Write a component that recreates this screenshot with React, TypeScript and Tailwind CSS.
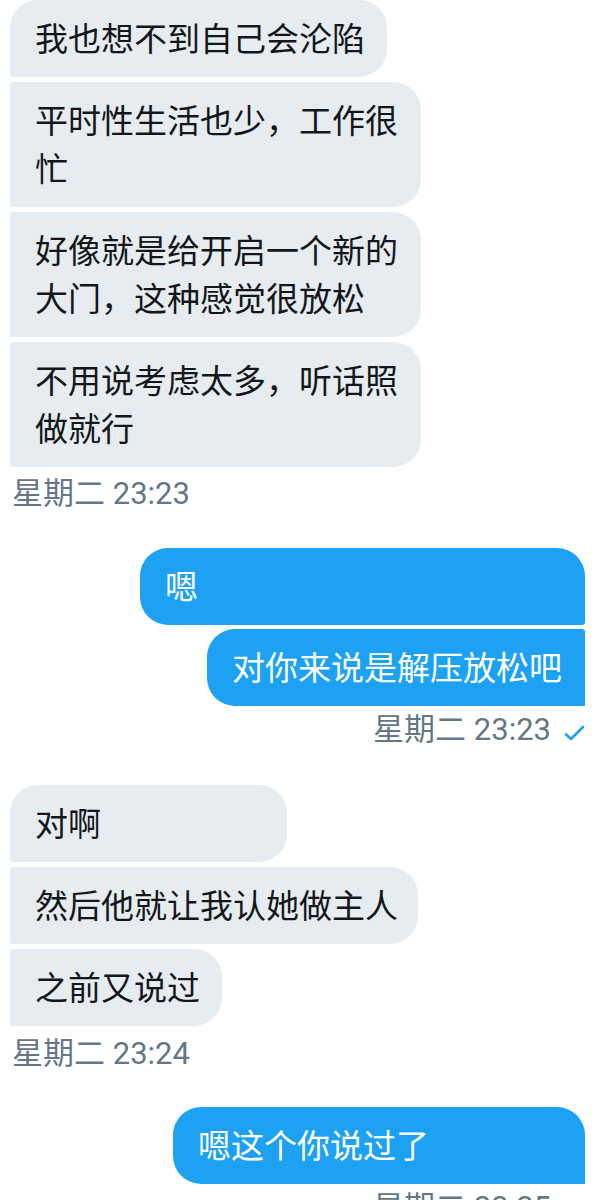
import React from "react";

type Msg = {
    text: string;
    width: number;
    corners: string;
};

const FONT = "font-['Roboto','Noto_Sans_CJK_SC',sans-serif]";

// Left-side (received) messages
const leftGroup1: Msg[] = [
    { text: "我也想不到自己会沦陷", width: 377, corners: "rounded-tl-[28px] rounded-bl-[3px] rounded-r-[28px]" },
    { text: "平时性生活也少，工作很忙", width: 411, corners: "rounded-l-[3px] rounded-r-[28px]" },
    { text: "好像就是给开启一个新的大门，这种感觉很放松", width: 411, corners: "rounded-l-[3px] rounded-r-[28px]" },
    { text: "不用说考虑太多，听话照做就行", width: 411, corners: "rounded-l-[3px] rounded-r-[28px]" },
];

const leftGroup2: Msg[] = [
    { text: "对啊", width: 277, corners: "rounded-tl-[28px] rounded-bl-[3px] rounded-r-[28px]" },
    { text: "然后他就让我认她做主人", width: 408, corners: "rounded-l-[3px] rounded-r-[28px]" },
    { text: "之前又说过", width: 212, corners: "rounded-tl-[3px] rounded-bl-none rounded-r-[28px]" },
];

const rightGroup1: Msg[] = [
    { text: "嗯", width: 445, corners: "rounded-l-[28px] rounded-tr-[28px] rounded-br-[3px]" },
    { text: "对你来说是解压放松吧", width: 378, corners: "rounded-l-[28px] rounded-tr-[3px] rounded-br-none" },
];

const rightGroup2: Msg[] = [
    { text: "嗯这个你说过了", width: 412, corners: "rounded-l-[28px] rounded-tr-[28px] rounded-br-none" },
];

const Bubble = ({ msg, mine }: { msg: Msg; mine: boolean }) => (
    <div
        className={`${msg.corners} pt-[15.5px] pb-[13.5px] pl-[25px] pr-[14px] text-[33px] leading-[48px] ${
            mine ? "bg-[#1da1f2] text-white" : "bg-[#e6ecf0] text-[#14171a]"
        }`}
        style={{ width: msg.width }}
    >
        {msg.text}
    </div>
);

const Check = () => (
    <svg width="22" height="16" viewBox="0 0 22 16" className="ml-[12px] mt-[6px]">
        <path d="M3 9.5 L8 14 L20 2" fill="none" stroke="#1da1f2" strokeWidth="2.6" strokeLinecap="round" strokeLinejoin="round" />
    </svg>
);

const Stamp = ({ time, mine, className }: { time: string; mine?: boolean; className: string }) => (
    <div
        className={`flex items-center text-[31px] leading-[36px] text-[#657786] ${
            mine ? "justify-end pr-[23px]" : "pl-[12px]"
        } ${className}`}
    >
        <span>星期二 {time}</span>
        {mine && <Check />}
    </div>
);

export default function App() {
    return (
        <div className={`w-[608px] h-[1200px] overflow-hidden bg-white flex flex-col ${FONT}`}>
            <div className="flex flex-col items-start gap-[5px] pl-[10px]">
                {leftGroup1.map((m, i) => (
                    <Bubble key={i} msg={m} mine={false} />
                ))}
            </div>
            <Stamp time="23:23" className="mt-[9px]" />

            <div className="flex flex-col items-end gap-[4px] pr-[23px] mt-[36px]">
                {rightGroup1.map((m, i) => (
                    <Bubble key={i} msg={m} mine />
                ))}
            </div>
            <Stamp time="23:23" mine className="mt-[6px]" />

            <div className="flex flex-col items-start gap-[5px] pl-[10px] mt-[37px]">
                {leftGroup2.map((m, i) => (
                    <Bubble key={i} msg={m} mine={false} />
                ))}
            </div>
            <Stamp time="23:24" className="mt-[10px]" />

            <div className="flex flex-col items-end gap-[4px] pr-[23px] mt-[35px]">
                {rightGroup2.map((m, i) => (
                    <Bubble key={i} msg={m} mine />
                ))}
            </div>
            <Stamp time="23:25" mine className="mt-[6px]" />
        </div>
    );
}
